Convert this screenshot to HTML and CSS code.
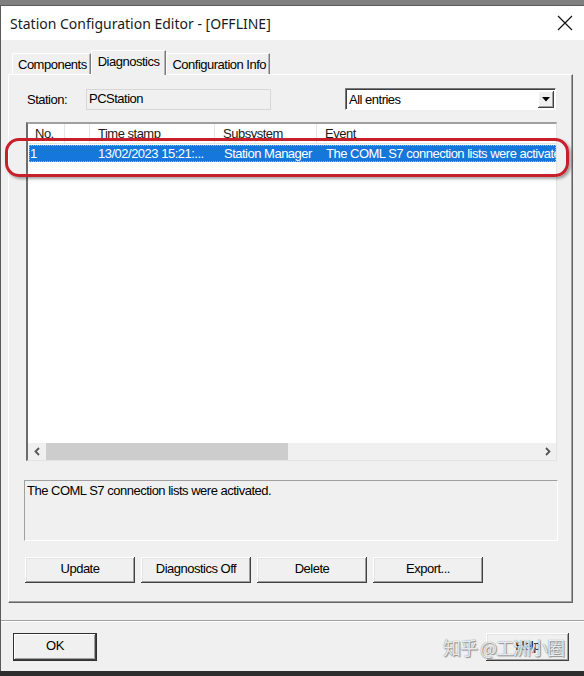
FILE: index.html
```html
<!DOCTYPE html>
<html lang="en">
<head>
    <meta charset="UTF-8">
    <title>Station Configuration Editor - [OFFLINE]</title>
    <link rel="stylesheet" href="styles.css">
</head>
<body>
    <div class="desk-strip"></div>
    <div class="window">
        <div class="titlebar">
            <span class="title">Station Configuration Editor - [OFFLINE]</span>
            <span class="close-btn">
                <svg width="16" height="16" viewBox="0 0 16 16"><path d="M1 1 L15 15 M15 1 L1 15" stroke="#111" stroke-width="1.2" fill="none"/></svg>
            </span>
        </div>

        <div class="dialog-body">
            <div class="tabs">
                <div class="tab">Components</div>
                <div class="tab active">Diagnostics</div>
                <div class="tab">Configuration Info</div>
            </div>

            <div class="panel">
                <div class="station-row">
                    <span class="label">Station:</span>
                    <div class="readonly-field">PCStation</div>
                    <div class="combo">
                        <span class="combo-text">All entries</span>
                        <span class="combo-btn">
                            <svg width="8" height="5" viewBox="0 0 8 5"><path d="M0 0 H8 L4 4.5 Z" fill="#000"/></svg>
                        </span>
                    </div>
                </div>

                <div class="listview">
                    <div class="list-head">
                        <div class="col col-no">No.</div>
                        <div class="col col-icon"></div>
                        <div class="col col-time">Time stamp</div>
                        <div class="col col-sub">Subsystem</div>
                        <div class="col col-event">Event</div>
                    </div>
                    <div class="list-body">
                        <div class="list-row selected">
                            <div class="cell col-no">1</div>
                            <div class="cell col-icon"></div>
                            <div class="cell col-time">13/02/2023 15:21:...</div>
                            <div class="cell col-sub">Station Manager</div>
                            <div class="cell col-event">The COML S7 connection lists were activated.</div>
                        </div>
                    </div>
                    <div class="hscroll">
                        <span class="scroll-arrow">
                            <svg width="6" height="9" viewBox="0 0 6 9"><path d="M5 1 L1.5 4.5 L5 8" stroke="#555" stroke-width="1.8" fill="none"/></svg>
                        </span>
                        <div class="track"><div class="thumb"></div></div>
                        <span class="scroll-arrow">
                            <svg width="6" height="9" viewBox="0 0 6 9"><path d="M1 1 L4.5 4.5 L1 8" stroke="#555" stroke-width="1.8" fill="none"/></svg>
                        </span>
                    </div>
                </div>

                <div class="message-box">The COML S7 connection lists were activated.</div>

                <div class="actions">
                    <button class="btn">Update</button>
                    <button class="btn">Diagnostics Off</button>
                    <button class="btn">Delete</button>
                    <button class="btn">Export...</button>
                </div>
            </div>

            <div class="separator"></div>

            <div class="footer">
                <button class="btn btn-default">OK</button>
                <button class="btn btn-help">Help</button>
            </div>
        </div>

        <div class="highlight-ring"></div>
        <div class="watermark">知乎 @工洲小圈</div>
    </div>
</body>
</html>
```

FILE: styles.css
```css
body {
    margin: 0;
    background-color: #2e2e2e;
    font-family: "Liberation Sans", Arial, sans-serif;
    font-size: 13px;
    letter-spacing: -0.5px;
    color: #000;
    overflow: hidden;
}

.desk-strip {
    height: 5px;
    background-color: #808080;
    border-bottom: 1px solid #5c5c5c;
}

.window {
    position: relative;
    width: 584px;
    height: 665px;
    box-sizing: border-box;
    background-color: #f0f0f0;
    border-left: 1px solid #5a5a5a;
}

/* title bar */
.titlebar {
    height: 34px;
    background-color: #ffffff;
    display: flex;
    align-items: center;
    justify-content: space-between;
    padding: 0 11px 0 9px;
}

.title {
    font-family: "Noto Sans", "Open Sans", sans-serif;
    font-size: 14px;
    letter-spacing: 0;
    color: #1a1a1a;
}

.close-btn {
    display: flex;
}

/* dialog body */
.dialog-body {
    padding-top: 10px;
}

.tabs {
    display: flex;
    align-items: flex-end;
    height: 24px;
    margin-left: 11px;
    position: relative;
    z-index: 1;
}

.tab {
    height: 21px;
    box-sizing: border-box;
    padding: 3px 3px 0 5px;
    border-left: 1px solid #ffffff;
    border-top: 1px solid #ffffff;
    border-right: 1px solid #7a7a7a;
    box-shadow: inset -1px 0 #b4b4b4;
    background-color: #f0f0f0;
    white-space: nowrap;
}

.tab.active {
    height: 25px;
    padding: 3px 6px 0 6px;
    margin-bottom: -1px;
}

.panel {
    margin-left: 7px;
    width: 565px;
    height: 529px;
    box-sizing: border-box;
    border-top: 1px solid #ffffff;
    border-left: 1px solid #ffffff;
    border-right: 1px solid #646464;
    border-bottom: 1px solid #646464;
    box-shadow: inset -1px -1px #a0a0a0;
    padding: 13px 15px 0 17px;
}

/* station row */
.station-row {
    display: flex;
    align-items: center;
    height: 22px;
}

.label {
    margin-left: 1px;
    width: 59px;
}

.readonly-field {
    width: 185px;
    height: 21px;
    box-sizing: border-box;
    border: 1px solid #d7d7d7;
    background-color: #f0f0f0;
    padding: 0 2px;
    line-height: 18px;
}

.combo {
    margin-left: 74px;
    width: 211px;
    height: 22px;
    box-sizing: border-box;
    display: flex;
    align-items: center;
    justify-content: space-between;
    background-color: #ffffff;
    border-top: 1px solid #7a7a7a;
    border-left: 1px solid #7a7a7a;
    border-right: 1px solid #ffffff;
    border-bottom: 1px solid #ffffff;
    box-shadow: inset 1px 1px #404040;
    padding-left: 3px;
}

.combo-btn {
    width: 16px;
    height: 17px;
    margin-right: 1px;
    display: flex;
    align-items: center;
    justify-content: center;
    background-color: #f0f0f0;
    box-shadow: inset -1px -1px #404040, inset 1px 1px #ffffff, inset -2px -2px #a0a0a0;
}

/* list view */
.listview {
    margin-top: 12px;
    height: 339px;
    box-sizing: border-box;
    display: flex;
    flex-direction: column;
    background-color: #ffffff;
    border-top: 2px solid #a0a0a0;
    border-left: 2px solid #6d6d6d;
    border-right: 1px solid #e3e3e3;
    border-bottom: 1px solid #e3e3e3;
    overflow: hidden;
}

.list-head,
.list-row {
    display: flex;
    white-space: nowrap;
}

.list-head {
    height: 20px;
    box-sizing: border-box;
    border-bottom: 1px solid #e5e5e5;
    line-height: 20px;
    color: #1a1a1a;
}

.col {
    box-sizing: border-box;
    border-right: 1px solid #e5e5e5;
    padding-left: 8px;
    flex-shrink: 0;
    overflow: hidden;
}

.col-no { width: 37px; }
.col-icon { width: 25px; }
.col-time { width: 125px; }
.col-sub { width: 102px; }
.col-event { width: 320px; border-right: none; }

.list-head .col-no { padding-left: 7px; }

.list-body {
    flex: 1;
    padding-top: 1px;
}

.list-row {
    height: 17px;
    line-height: 17px;
    margin-left: 1px;
}

.list-row.selected {
    background-color: #1577dc;
    color: #ffffff;
    outline: 1px dotted #8fc0f2;
    outline-offset: -1px;
}

.cell {
    box-sizing: border-box;
    flex-shrink: 0;
    overflow: hidden;
    padding-left: 8px;
}

.list-row .col-no { padding-left: 1px; width: 36px; }
.list-row .col-time { padding-left: 8px; }
.list-row .col-sub { padding-left: 9px; }
.list-row .col-event { padding-left: 9px; }

.hscroll {
    height: 17px;
    display: flex;
    background-color: #f0f0f0;
}

.scroll-arrow {
    width: 17px;
    display: flex;
    align-items: center;
    justify-content: center;
    flex-shrink: 0;
}

.track {
    flex: 1;
}

.thumb {
    width: 242px;
    height: 17px;
    margin-left: 1px;
    background-color: #cdcdcd;
}

/* message box */
.message-box {
    margin-top: 19px;
    margin-left: -2px;
    width: 534px;
    height: 61px;
    box-sizing: border-box;
    border-top: 1px solid #a0a0a0;
    border-left: 1px solid #a0a0a0;
    border-right: 1px solid #ffffff;
    border-bottom: 1px solid #ffffff;
    padding: 1px 2px;
    line-height: 17px;
}

/* buttons */
.actions {
    margin-top: 16px;
    margin-left: -1px;
    display: flex;
    gap: 6px;
}

.btn {
    font-family: inherit;
    font-size: 13px;
    letter-spacing: -0.5px;
    color: #000;
    width: 110px;
    height: 26px;
    background-color: #f0f0f0;
    border: none;
    padding: 0 0 3px 0;
    box-shadow: inset -1px -1px #404040, inset 1px 1px #ffffff, inset -2px -2px #a0a0a0, inset 2px 2px #e3e3e3;
}

.separator {
    margin-top: 17px;
    height: 1px;
    background-color: #a0a0a0;
    border-bottom: 1px solid #ffffff;
}

.footer {
    margin-top: 11px;
    display: flex;
    justify-content: space-between;
    padding: 0 15px 0 12px;
}

.btn-default {
    width: 84px;
    height: 28px;
    box-shadow: inset 0 0 0 1px #303030, inset -2px -2px #404040, inset 2px 2px #ffffff, inset -3px -3px #a0a0a0;
}

.btn-help {
    width: 83px;
    height: 28px;
}

/* annotation drawn over the screenshot */
.highlight-ring {
    position: absolute;
    left: 4px;
    top: 132px;
    width: 558px;
    height: 33px;
    border: 3px solid #c8202a;
    border-radius: 14px;
    box-shadow: 2px 2px 3px rgba(0, 0, 0, 0.35);
    pointer-events: none;
}

.watermark {
    position: absolute;
    left: 442px;
    top: 628px;
    font-family: "Noto Sans CJK SC", sans-serif;
    font-size: 18px;
    color: rgba(255, 255, 255, 0.85);
    text-shadow: 0 0 1px #707070, 1px 1px 1px #909090;
    letter-spacing: -1px;
    white-space: nowrap;
}
```
